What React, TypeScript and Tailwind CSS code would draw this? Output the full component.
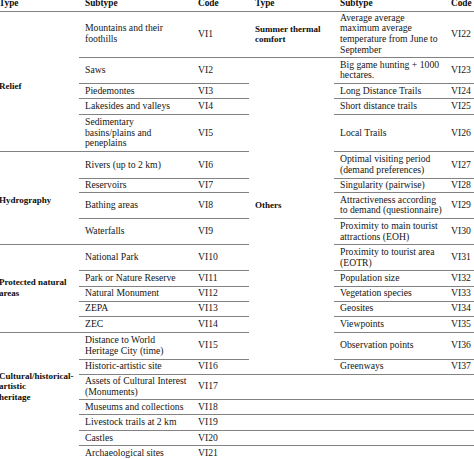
import React from "react";

type Row = { sub: string[]; code: string; r: string };

// Left half: type groups spanning grid rows 2..22 (row 1 is the header)
const leftGroups = [
  {
    label: ["Relief"],
    pad: "pt-[69px]",
    span: "row-[2/7]",
    rows: [
      { sub: ["Mountains and their", "foothills"], code: "VI1", r: "row-[2]" },
      { sub: ["Saws"], code: "VI2", r: "row-[3]" },
      { sub: ["Piedemontes"], code: "VI3", r: "row-[4]" },
      { sub: ["Lakesides and valleys"], code: "VI4", r: "row-[5]" },
      { sub: ["Sedimentary", "basins/plains and", "peneplains"], code: "VI5", r: "row-[6]" },
    ],
  },
  {
    label: ["Hydrography"],
    pad: "pt-[43px]",
    span: "row-[7/11]",
    rows: [
      { sub: ["Rivers (up to 2 km)"], code: "VI6", r: "row-[7]" },
      { sub: ["Reservoirs"], code: "VI7", r: "row-[8]" },
      { sub: ["Bathing areas"], code: "VI8", r: "row-[9]" },
      { sub: ["Waterfalls"], code: "VI9", r: "row-[10]" },
    ],
  },
  {
    label: ["Protected natural", "areas"],
    pad: "pt-[32px]",
    span: "row-[11/16]",
    rows: [
      { sub: ["National Park"], code: "VI10", r: "row-[11]" },
      { sub: ["Park or Nature Reserve"], code: "VI11", r: "row-[12]" },
      { sub: ["Natural Monument"], code: "VI12", r: "row-[13]" },
      { sub: ["ZEPA"], code: "VI13", r: "row-[14]" },
      { sub: ["ZEC"], code: "VI14", r: "row-[15]" },
    ],
  },
  {
    label: ["Cultural/historical-", "artistic", "heritage"],
    pad: "pt-[38px]",
    span: "row-[16/23]",
    rows: [
      { sub: ["Distance to World", "Heritage City (time)"], code: "VI15", r: "row-[16]" },
      { sub: ["Historic-artistic site"], code: "VI16", r: "row-[17]" },
      { sub: ["Assets of Cultural Interest", "(Monuments)"], code: "VI17", r: "row-[18]" },
      { sub: ["Museums and collections"], code: "VI18", r: "row-[19]" },
      { sub: ["Livestock trails at 2 km"], code: "VI19", r: "row-[20]" },
      { sub: ["Castles"], code: "VI20", r: "row-[21]" },
      { sub: ["Archaeological sites"], code: "VI21", r: "row-[22]" },
    ],
  },
];

const rightGroups = [
  {
    label: ["Summer thermal", "comfort"],
    pad: "pt-[12px]",
    span: "row-[2/3]",
    rows: [
      {
        sub: ["Average average", "maximum average", "temperature from June to", "September"],
        code: "VI22",
        r: "row-[2]",
      },
    ],
  },
  {
    label: ["Others"],
    pad: "pt-[142px]",
    span: "row-[3/18]",
    rows: [
      { sub: ["Big game hunting + 1000", "hectares."], code: "VI23", r: "row-[3]" },
      { sub: ["Long Distance Trails"], code: "VI24", r: "row-[4]" },
      { sub: ["Short distance trails"], code: "VI25", r: "row-[5]" },
      { sub: ["Local Trails"], code: "VI26", r: "row-[6]" },
      { sub: ["Optimal visiting period", "(demand preferences)"], code: "VI27", r: "row-[7]" },
      { sub: ["Singularity (pairwise)"], code: "VI28", r: "row-[8]" },
      { sub: ["Attractiveness according", "to demand (questionnaire)"], code: "VI29", r: "row-[9]" },
      { sub: ["Proximity to main tourist", "attractions (EOH)"], code: "VI30", r: "row-[10]" },
      { sub: ["Proximity to tourist area", "(EOTR)"], code: "VI31", r: "row-[11]" },
      { sub: ["Population size"], code: "VI32", r: "row-[12]" },
      { sub: ["Vegetation species"], code: "VI33", r: "row-[13]" },
      { sub: ["Geosites"], code: "VI34", r: "row-[14]" },
      { sub: ["Viewpoints"], code: "VI35", r: "row-[15]" },
      { sub: ["Observation points"], code: "VI36", r: "row-[16]" },
      { sub: ["Greenways"], code: "VI37", r: "row-[17]" },
    ],
  },
];

// empty right-hand rows below the "Others" group still carry the rules
const emptyRows = ["row-[18]", "row-[19]", "row-[20]", "row-[21]", "row-[22]"];

const line = "border-b border-[#828282]";

function Lines({ lines }: { lines: string[] }) {
  return (
    <>
      {lines.map((l, i) => (
        <span key={i} className="block whitespace-nowrap">
          {l}
        </span>
      ))}
    </>
  );
}

function Cells({ row, side }: { row: Row; side: "left" | "right" }) {
  const subCol = side === "left" ? "col-[2]" : "col-[5]";
  const codeCol = side === "left" ? "col-[3]" : "col-[6]";
  return (
    <>
      <div className={`${subCol} ${row.r} ${line} flex items-center pl-[6px]`}>
        <div>
          <Lines lines={row.sub} />
        </div>
      </div>
      <div className={`${codeCol} ${row.r} ${line} flex items-center pl-[5px] whitespace-nowrap`}>
        {row.code}
      </div>
    </>
  );
}

const headers = [
  { t: "Type", c: "col-[1] pl-[6px]" },
  { t: "Subtype", c: "col-[2] pl-[6px]" },
  { t: "Code", c: "col-[3] pl-[5px]" },
  { t: "Type", c: "col-[4] pl-[6px]" },
  { t: "Subtype", c: "col-[5] pl-[6px]" },
  { t: "Code", c: "col-[6] pl-[5px]" },
];

export default function App() {
  return (
    <div className="w-[474px] h-[459px] overflow-hidden bg-white">
      <div className="-mt-[3.5px] -ml-[7px] grid grid-cols-[86px_114px_56px_85px_112px_40px] grid-rows-[15px_46px_26.5px_15px_16px_37px_27px_13.5px_26.5px_26px_26px_15.5px_15px_15px_16px_27px_15px_25.5px_15px_16px_15px_15px] font-['Liberation_Serif',serif] text-[9.7px] leading-[10.6px] text-[#161616]">
        {headers.map((h, i) => (
          <div
            key={i}
            className={`row-[1] ${h.c} ${line} flex items-center font-bold text-[9.3px] text-[#0d0d0d] whitespace-nowrap`}
          >
            {h.t}
          </div>
        ))}

        {leftGroups.map((g) => (
          <React.Fragment key={g.label[0]}>
            <div className={`col-[1] ${g.span} ${line} ${g.pad} pl-[6px] font-bold text-[9px] text-[#0d0d0d]`}>
              <Lines lines={g.label} />
            </div>
            {g.rows.map((r) => (
              <Cells key={r.code} row={r} side="left" />
            ))}
          </React.Fragment>
        ))}

        {rightGroups.map((g) => (
          <React.Fragment key={g.label[0]}>
            <div className={`col-[4] ${g.span} ${line} ${g.pad} pl-[6px] font-bold text-[9px] text-[#0d0d0d]`}>
              <Lines lines={g.label} />
            </div>
            {g.rows.map((r) => (
              <Cells key={r.code} row={r} side="right" />
            ))}
          </React.Fragment>
        ))}

        {emptyRows.map((r) => (
          <div key={r} className={`col-[4/7] ${r} ${line}`} />
        ))}
      </div>
    </div>
  );
}
